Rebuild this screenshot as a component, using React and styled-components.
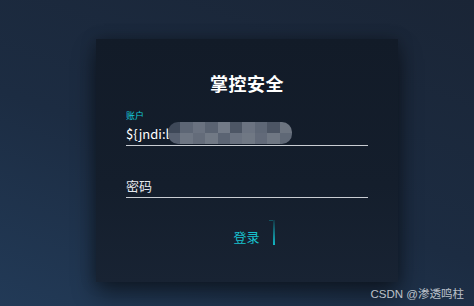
import React from "react";
import styled, { createGlobalStyle } from "styled-components";

const Global = createGlobalStyle`
  html, body { margin: 0; padding: 0; }
  body {
    width: 474px;
    height: 306px;
    overflow: hidden;
    font-family: "Noto Sans CJK SC", "Noto Sans", sans-serif;
    background: linear-gradient(20deg, #223a57 0%, #1c2c42 45%, #1a2536 100%);
  }
`;

const Page = styled.div`
  position: relative;
  width: 474px;
  height: 306px;
  display: flex;
  align-items: flex-start;
  padding: 39px 0 0 96px;
  box-sizing: border-box;
`;

const Card = styled.div`
  width: 302px;
  height: 243px;
  box-sizing: border-box;
  padding: 32px 30px 0;
  background: linear-gradient(180deg, #121b28 0%, #141e2c 60%, #182333 100%);
  box-shadow: 0 12px 22px rgba(0, 0, 0, 0.45), 0 0 14px rgba(0, 0, 0, 0.25);
  display: flex;
  flex-direction: column;
`;

const Title = styled.h2`
  margin: 0 0 15px;
  text-align: center;
  color: #ffffff;
  font-size: 18px;
  line-height: 24px;
  font-weight: 700;
  letter-spacing: 0.5px;
`;

const Field = styled.div`
  position: relative;
  padding-top: 12px;
  margin-bottom: ${(p) => (p.$last ? 0 : 16)}px;
`;

const Label = styled.label`
  position: absolute;
  left: 0;
  top: 0;
  font-size: 9px;
  line-height: 12px;
  color: #16c9d6;
`;

const Input = styled.div`
  height: 23px;
  line-height: 23px;
  font-size: 13px;
  color: ${(p) => (p.$placeholder ? "#e6e9ee" : "#ffffff")};
  border-bottom: 1px solid #c9cdd3;
  position: relative;
`;

const Redact = styled.div`
  position: absolute;
  left: 42px;
  top: 0;
  width: 124px;
  height: 22px;
  border-radius: 10px;
  overflow: hidden;
  display: grid;
  grid-template-columns: repeat(10, 1fr);
  grid-template-rows: repeat(2, 1fr);
  filter: blur(0.6px);
`;

const Cell = styled.span`
  background: ${(p) => p.$c};
`;

const ButtonRow = styled.div`
  display: flex;
  justify-content: center;
  margin-top: 20px;
`;

const Button = styled.button`
  position: relative;
  background: transparent;
  border: none;
  padding: 10px 15px 10px 14px;
  font-family: inherit;
  font-size: 13px;
  line-height: 17px;
  color: #18c2cf;
  cursor: pointer;
`;

const Line = styled.span`
  position: absolute;
  right: 0;
  top: 2px;
  width: 2px;
  height: 25px;
  background: linear-gradient(180deg, rgba(3, 233, 244, 0.1), #12b6c4);
`;

const TopTick = styled.span`
  position: absolute;
  right: 2px;
  top: 2px;
  width: 4px;
  height: 1px;
  background: rgba(3, 233, 244, 0.25);
`;

const Watermark = styled.div`
  position: absolute;
  right: 10px;
  bottom: 5px;
  font-family: "Liberation Sans", "Noto Sans CJK SC", sans-serif;
  font-size: 11.5px;
  color: rgba(235, 238, 242, 0.78);
`;

const cells = [
  "#3e4858", "#5d6675", "#6a7280", "#5a6372", "#727a87", "#4d5665", "#6b7381", "#5e6776", "#4c5564", "#6c7480",
  "#576070", "#6e7683", "#646c7a", "#717985", "#5b6473", "#6a7280", "#707884", "#626a79", "#6f7783", "#5f6876",
];

export default function App() {
  return (
    <>
      <Global />
      <Page>
        <Card>
          <Title>掌控安全</Title>
          <Field>
            <Label>账户</Label>
            <Input>
              {"${jndi:l"}
              <Redact>
                {cells.map((c, i) => (
                  <Cell key={i} $c={c} />
                ))}
              </Redact>
            </Input>
          </Field>
          <Field $last>
            <Input $placeholder>密码</Input>
          </Field>
          <ButtonRow>
            <Button>
              登录
              <Line />
              <TopTick />
            </Button>
          </ButtonRow>
        </Card>
        <Watermark>CSDN @渗透鸣柱</Watermark>
      </Page>
    </>
  );
}
